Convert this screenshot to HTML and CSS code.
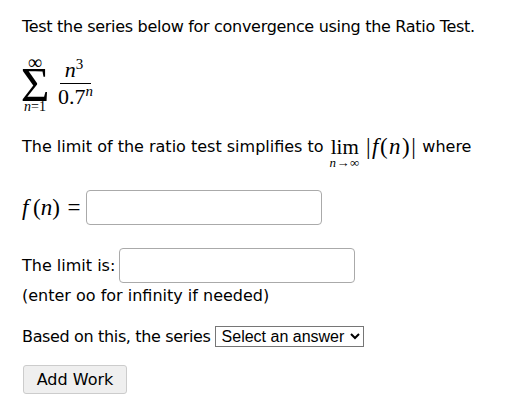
FILE: index.html
```html
<!DOCTYPE html>
<html lang="en">
<head>
	<meta charset="UTF-8" />
	<title>Ratio Test</title>
	<link rel="stylesheet" href="styles.css">
</head>
<body>
	<div class="question">
		<p class="intro">Test the series below for convergence using the Ratio Test.</p>

		<div class="series">
			<div class="sigma">
				<span class="sig-top">&infin;</span>
				<span class="sig-sym">&Sigma;</span>
				<span class="sig-bot"><i>n</i>=1</span>
			</div>
			<div class="frac">
				<span class="num"><i>n</i><sup>3</sup></span>
				<span class="den">0.7<sup><i>n</i></sup></span>
			</div>
		</div>

		<p class="limit-line">
			<span>The limit of the ratio test simplifies to</span>
			<span class="lim">
				<span class="lim-word">lim</span>
				<span class="lim-sub"><i>n</i>&rarr;&infin;</span>
			</span>
			<span class="math abs">|<i>f</i>(<i>n</i>)|</span>
			<span>where</span>
		</p>

		<div class="row fn-row">
			<span class="math fn"><i>f</i>&thinsp;(<i>n</i>)&nbsp;=</span>
			<input type="text" class="answer" />
		</div>

		<div class="row limit-row">
			<span>The limit is:</span>
			<input type="text" class="answer" />
		</div>
		<p class="hint">(enter oo for infinity if needed)</p>

		<div class="row select-row">
			<span class="tight">Based on this, the series</span>
			<select class="choice">
				<option>Select an answer</option>
			</select>
		</div>

		<button class="work-btn">Add Work</button>
	</div>
</body>
</html>
```

FILE: styles.css
```css
html {
	background: white;
}

body {
	margin: 0;
	font-family: 'DejaVu Sans', sans-serif;
	font-size: 16px;
	color: #000;
}

.question {
	padding: 16px 22px;
}

p {
	margin: 0;
}

.intro {
	line-height: 22px;
	white-space: nowrap;
	letter-spacing: -0.3px;
}

/* series */
.series {
	display: flex;
	align-items: flex-start;
	height: 60px;
	margin-top: 17px;
	font-family: 'Liberation Serif', serif;
}

.sigma {
	display: flex;
	flex-direction: column;
	align-items: center;
	width: 32px;
	margin-left: -3px;
}

.sig-top {
	font-size: 20px;
	line-height: 14px;
}

.sig-sym {
	display: block;
	font-size: 38px;
	line-height: 26px;
	height: 26px;
	transform: scale(1.3);
	transform-origin: 50% 20%;
}

.sig-bot {
	font-size: 14px;
	line-height: 16px;
	margin-top: 4px;
}

.frac {
	display: flex;
	flex-direction: column;
	align-items: center;
	margin-left: 4px;
	margin-top: 4px;
	font-size: 22px;
}

.num {
	padding: 0 8px 2px 5px;
	line-height: 22px;
	border-bottom: 1px solid #000;
}

.den {
	padding: 2px 3px 0;
	line-height: 22px;
}

sup {
	font-size: 15px;
	vertical-align: 8px;
	line-height: 0;
}

/* limit line */
.limit-line {
	margin-top: 21px;
	display: flex;
	align-items: flex-start;
	line-height: 22px;
}

.lim {
	display: inline-flex;
	flex-direction: column;
	align-items: center;
	margin-left: 6px;
	font-family: 'Liberation Serif', serif;
}

.lim-word {
	font-size: 21px;
	line-height: 22px;
}

.lim-sub {
	font-size: 13px;
	line-height: 10px;
	letter-spacing: 0.5px;
}

.math {
	font-family: 'Liberation Serif', serif;
	font-size: 23px;
}

.abs {
	margin: 0 5px 0 6px;
	letter-spacing: 1.5px;
}

.fn {
	word-spacing: 2px;
}

/* inputs */
.row {
	display: flex;
	align-items: center;
	gap: 5px;
}

.fn-row {
	margin-top: 22px;
}

.limit-row {
	margin-top: 23px;
	gap: 4px;
}

.answer {
	width: 236px;
	height: 35px;
	box-sizing: border-box;
	border: 1px solid #aaa;
	border-radius: 4px;
}

.hint {
	margin-top: 2px;
	line-height: 22px;
}

.select-row {
	margin-top: 19px;
	gap: 4px;
}

.tight {
	letter-spacing: -0.35px;
}

.choice {
	font-family: 'Liberation Sans', sans-serif;
	font-size: 16px;
	height: 21px;
	border: 1px solid #767676;
	border-radius: 0;
	background: white;
	padding: 0 2px;
}

.work-btn {
	margin-top: 18px;
	margin-left: 1px;
	width: 104px;
	height: 29px;
	font-family: 'DejaVu Sans', sans-serif;
	font-size: 16px;
	background: #efefef;
	border: 1px solid #ccc;
	border-radius: 3px;
}
```
